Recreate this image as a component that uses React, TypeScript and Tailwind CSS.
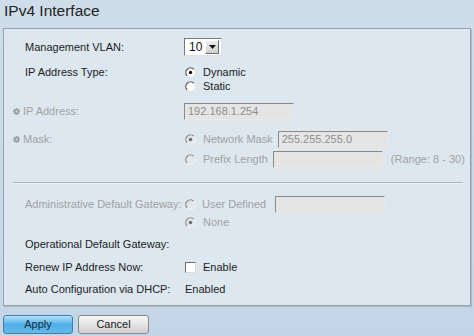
import React from "react";

function Radio({ checked, disabled }: { checked?: boolean; disabled?: boolean }) {
  const fill = disabled ? "#e4e6e8" : "#ffffff";
  const dark = disabled ? "#8e8e8e" : "#5a5a5a";
  const light = disabled ? "#f2f2f2" : "#e8e8e8";
  const dot = disabled ? "#6a6a6a" : "#111111";
  return (
    <svg width="11" height="11" viewBox="0 0 11 11" className="shrink-0">
      <circle cx="5.5" cy="5.5" r="4.6" fill={fill} />
      <path d="M8.8 2.2 A4.6 4.6 0 0 0 2.2 8.8" stroke={dark} strokeWidth="1.3" fill="none" />
      <path d="M2.2 8.8 A4.6 4.6 0 0 0 8.8 2.2" stroke={light} strokeWidth="1.1" fill="none" />
      {checked && <circle cx="5.5" cy="5.5" r="1.7" fill={dot} />}
    </svg>
  );
}

function Gear() {
  return (
    <svg width="7" height="7" viewBox="0 0 7 7" className="shrink-0">
      <g stroke="#9a9a9a" strokeWidth="1.4">
        <line x1="3.5" y1="0" x2="3.5" y2="7" />
        <line x1="0" y1="3.5" x2="7" y2="3.5" />
        <line x1="1" y1="1" x2="6" y2="6" />
        <line x1="6" y1="1" x2="1" y2="6" />
      </g>
      <circle cx="3.5" cy="3.5" r="2.2" fill="#9a9a9a" />
      <circle cx="3.5" cy="3.5" r="0.9" fill="#dde7f0" />
    </svg>
  );
}

function TextBox({ value, className = "" }: { value?: string; className?: string }) {
  return (
    <div
      className={`w-[110px] h-[17px] bg-[#e5e5e5] border-t border-l border-t-[#8a8a8a] border-l-[#8a8a8a] border-r border-b border-r-[#e9e9e9] border-b-[#e9e9e9] pl-[3px] text-[#8e8e8e] leading-[15px] ${className}`}
    >
      {value}
    </div>
  );
}

export default function App() {
  return (
    <div className="w-[474px] h-[336px] overflow-hidden bg-gradient-to-b from-[#cfddeb] to-[#c3d5e6] font-['Liberation_Sans',Arial,sans-serif]">
      <div className="h-[28px] pl-[4px] pt-[1px] text-[15.5px] leading-[20px] text-[#222]">IPv4 Interface</div>

      <div className="ml-[3px] w-[468px] h-[278px] border border-[#98a2ac] bg-[#dde7f0] shadow-[1px_1px_0_#aeb8c2] pt-[8px] text-[11px] text-[#1c1c1c]">
        {/* Management VLAN */}
        <div className="flex items-center h-[20px]">
          <div className="w-[180px] pl-[21px]">Management VLAN:</div>
          <div className="flex items-center w-[38px] h-[18px] bg-white border-t border-l border-[#7a7a7a] border-r border-b border-r-[#e0e0e0] border-b-[#e0e0e0]">
            <span className="pl-[4px] text-[12px] text-[#111] w-[20px]">10</span>
            <div className="w-[14px] h-[14px] bg-gradient-to-b from-[#eeeeee] to-[#cfcfcf] border border-t-[#fff] border-l-[#fff] border-r-[#6a6a6a] border-b-[#6a6a6a] flex items-center justify-center">
              <svg width="7" height="4" viewBox="0 0 7 4"><polygon points="0,0 7,0 3.5,4" fill="#111" /></svg>
            </div>
          </div>
        </div>

        {/* IP Address Type */}
        <div className="flex mt-[8px]">
          <div className="w-[180px] pl-[21px] h-[14px] leading-[14px]">IP Address Type:</div>
          <div className="flex flex-col">
            <div className="flex items-center h-[14px] pl-[1px] gap-[7px]"><Radio checked /><span>Dynamic</span></div>
            <div className="flex items-center h-[14px] pl-[1px] gap-[7px]"><Radio /><span>Static</span></div>
          </div>
        </div>

        {/* IP Address */}
        <div className="flex items-center h-[18px] mt-[9px] text-[#a2a2a2]">
          <div className="w-[180px] pl-[9px] flex items-center gap-[3px]"><Gear /><span>IP Address:</span></div>
          <TextBox value="192.168.1.254" />
        </div>

        {/* Mask */}
        <div className="flex mt-[10px] text-[#a2a2a2]">
          <div className="w-[180px] pl-[9px] flex items-center gap-[3px] h-[18px] self-start"><Gear /><span>Mask:</span></div>
          <div className="flex flex-col gap-[2px]">
            <div className="flex items-center h-[18px] pl-[1px]">
              <Radio checked disabled />
              <span className="ml-[7px]">Network Mask</span>
              <TextBox value="255.255.255.0" className="ml-[5px]" />
            </div>
            <div className="flex items-center h-[18px] pl-[1px]">
              <Radio disabled />
              <span className="ml-[7px]">Prefix Length</span>
              <TextBox className="ml-[5px]" />
              <span className="ml-[8px]">(Range: 8 - 30)</span>
            </div>
          </div>
        </div>

        <div className="mt-[14px] ml-[9px] mr-[7px] h-[2px] border-t border-[#aab5c0] border-b border-b-[#eef3f7]" />

        {/* Admin Default Gateway */}
        <div className="flex mt-[11px] text-[#a2a2a2]">
          <div className="w-[180px] pl-[21px] h-[18px] leading-[18px]">Administrative Default Gateway:</div>
          <div className="flex flex-col">
            <div className="flex items-center h-[18px] pl-[1px]">
              <Radio disabled />
              <span className="ml-[6px]">User Defined</span>
              <TextBox className="ml-[9px] w-[109px]" />
            </div>
            <div className="flex items-center h-[18px] pl-[1px]">
              <Radio checked disabled />
              <span className="ml-[7px]">None</span>
            </div>
          </div>
        </div>

        <div className="flex items-center h-[18px] mt-[4px]">
          <div className="w-[180px] pl-[21px]">Operational Default Gateway:</div>
        </div>

        <div className="flex items-center h-[18px] mt-[5px]">
          <div className="w-[180px] pl-[21px]">Renew IP Address Now:</div>
          <div className="ml-[1px] w-[11px] h-[11px] bg-white border-t border-l border-[#6a6a6a] border-r border-b border-r-[#dcdcdc] border-b-[#dcdcdc]" />
          <span className="ml-[7px]">Enable</span>
        </div>

        <div className="flex items-center h-[18px] mt-[4px]">
          <div className="w-[180px] pl-[21px]">Auto Configuration via DHCP:</div>
          <span className="ml-[1px]">Enabled</span>
        </div>
      </div>

      <div className="mt-[9px] ml-[3px] flex gap-[5px] text-[11px]">
        <button className="w-[70px] h-[19px] rounded-[3px] border border-[#4a7ca3] bg-gradient-to-b from-[#b3e1f8] via-[#4dafe6] to-[#62bbec] text-[#1a2a3a] leading-[17px]">
          Apply
        </button>
        <button className="w-[71px] h-[19px] rounded-[3px] border border-[#8a8a8a] bg-gradient-to-b from-[#f8f8f8] via-[#e3e3e3] to-[#d0d0d0] text-[#1a1a1a] leading-[17px]">
          Cancel
        </button>
      </div>
    </div>
  );
}
